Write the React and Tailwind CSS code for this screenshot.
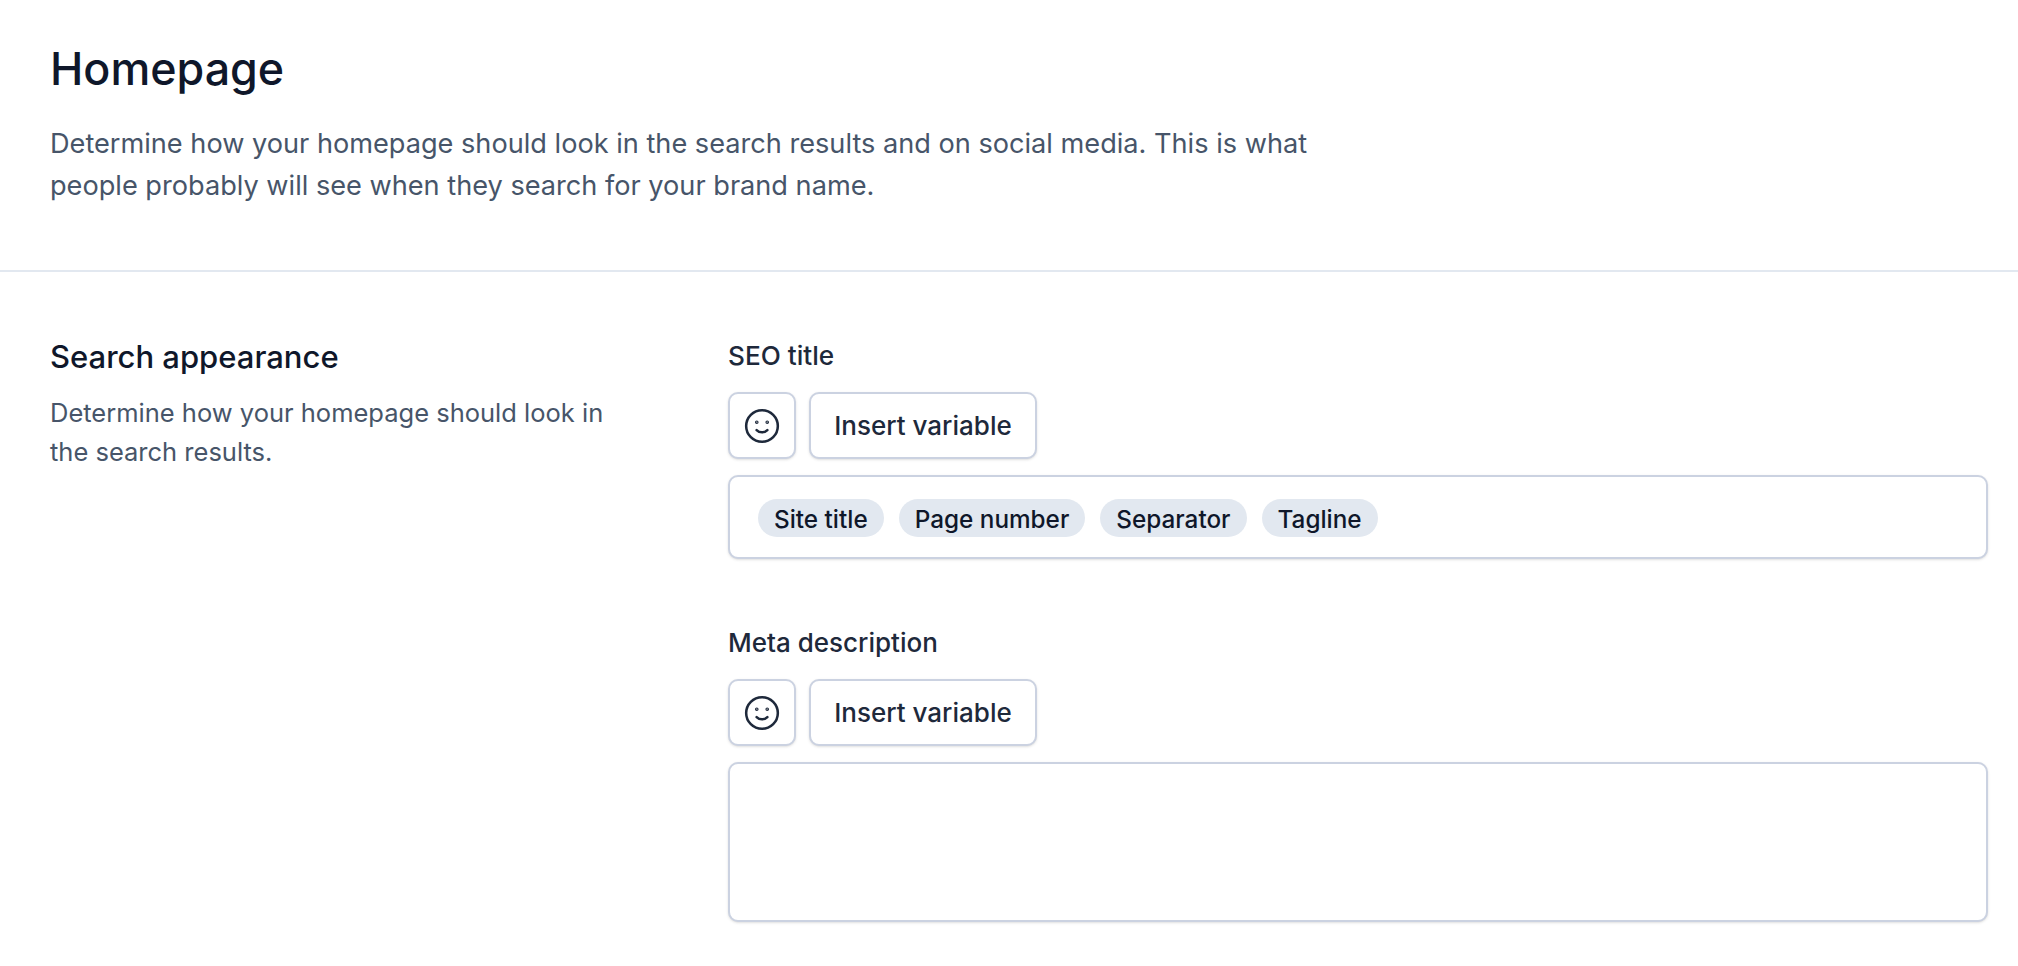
function Smile() {
  return (
    <svg className="w-[38px] h-[38px]" viewBox="0 0 24 24" fill="none" stroke="#1e293b" strokeWidth="1.6" strokeLinecap="round" strokeLinejoin="round">
      <circle cx="12" cy="12" r="10" />
      <path d="M8.6 14.6c.9.9 2.1 1.4 3.4 1.4s2.5-.5 3.4-1.4" />
      <circle cx="8.7" cy="9.6" r="0.35" fill="#1e293b" />
      <circle cx="15.3" cy="9.6" r="0.35" fill="#1e293b" />
    </svg>
  );
}
function Toolbar() {
  return (
    <div className="flex gap-[13px] mt-[18px]">
      <div className="w-[68px] h-[67px] flex items-center justify-center rounded-[10px] border-2 border-[#cbd2e1] shadow-sm bg-white"><Smile /></div>
      <div className="h-[67px] w-[228px] flex items-center justify-center rounded-[10px] border-2 border-[#cbd2e1] shadow-sm bg-white text-[26px] font-medium text-[#1e293b]">Insert variable</div>
    </div>
  );
}
function Chip({ children }) {
  return <span className="h-[38px] px-4 pt-[2px] flex items-center rounded-full bg-[#e2e8f0] text-[24.3px] font-medium text-[#0f172a]">{children}</span>;
}
export default function App() {
  return (
    <div className="min-h-[966px] bg-white font-['Inter',sans-serif] overflow-hidden">
      <header className="h-[272px] border-b-2 border-[#e2e8f0] pl-[50px] pt-[38px]">
        <h1 className="text-[44.8px] leading-[62px] font-medium text-[#0f172a]">Homepage</h1>
        <p className="mt-[23px] w-[1320px] text-[27.15px] leading-[42px] text-[#475569]">Determine how your homepage should look in the search results and on social media. This is what people probably will see when they search for your brand name.</p>
      </header>
      <section className="flex pl-[50px] pr-[30px] pt-[66px]">
        <div className="w-[678px] shrink-0">
          <h2 className="-mt-px text-[31px] leading-[40px] font-medium text-[#0f172a]">Search appearance</h2>
          <p className="mt-[16px] w-[570px] text-[25.5px] leading-[39px] text-[#475569]">Determine how your homepage should look in the search results.</p>
        </div>
        <div className="flex-1">
          <label className="block text-[26.2px] leading-[36px] font-medium text-[#1e293b]">SEO title</label>
          <Toolbar />
          <div className="mt-[16px] h-[84px] pt-[2px] rounded-[10px] border-2 border-[#cbd2e1] shadow-sm bg-white flex items-center gap-[15px] px-[28px]">
            <Chip>Site title</Chip><Chip>Page number</Chip><Chip>Separator</Chip><Chip>Tagline</Chip>
          </div>
          <label className="block mt-[66px] text-[26px] leading-[36px] font-medium text-[#1e293b]">Meta description</label>
          <Toolbar />
          <div className="mt-[16px] h-[160px] rounded-[10px] border-2 border-[#cbd2e1] shadow-sm bg-white" />
        </div>
      </section>
    </div>
  );
}
